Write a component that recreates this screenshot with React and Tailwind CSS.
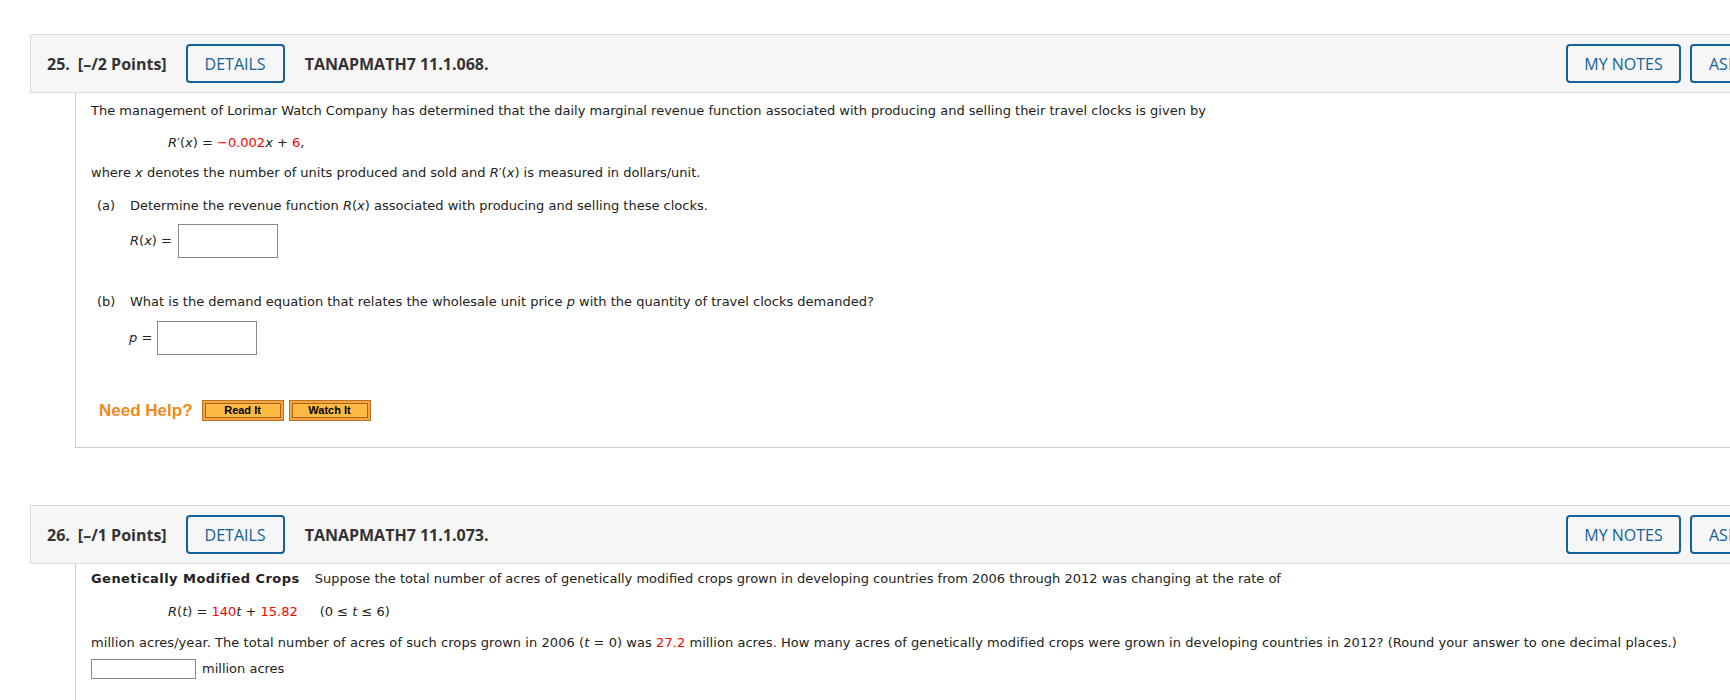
import React from "react";

const body = "font-['DejaVu_Sans',sans-serif] text-[13px] leading-[18px] text-[#222]";

function Header({ num, pts, code }) {
  return (
    <div className="w-[1900px] h-[59px] border border-[#dcdcdc] bg-[#f6f6f6] flex items-center font-['Open_Sans',sans-serif] text-[16px] text-[#333]">
      <div className="w-[1535px] shrink-0 flex items-center pl-[16px]">
        <span className="font-bold">{num}.</span>
        <span className="font-bold ml-[8px]">[–/{pts} Points]</span>
        <button className="ml-[19px] h-[39px] w-[99px] border-2 border-[#14609a] rounded-[4px] text-[#14609a] flex items-center justify-center">DETAILS</button>
        <span className="font-bold ml-[20px]">{code}</span>
      </div>
      <div className="flex items-center gap-[9px]">
        <button className="h-[39px] w-[115px] border-2 border-[#14609a] rounded-[4px] text-[#14609a] flex items-center justify-center">MY NOTES</button>
        <button className="h-[39px] px-[17px] border-2 border-[#14609a] rounded-[4px] text-[#14609a] flex items-center justify-center">ASK YOUR TEACHER</button>
      </div>
    </div>
  );
}

function HelpButton({ children }) {
  return (
    <div className="h-[21px] w-[82px] border border-[#b9732a] bg-[#f7a53a] p-[2px]">
      <div className="h-full w-full border border-[#a7641f] bg-[#fdbb46] flex items-center justify-center font-['Liberation_Sans',Arial,sans-serif] font-bold text-[11px] text-black leading-none">
        {children}
      </div>
    </div>
  );
}

const Red = ({ children }) => <span className="text-[#ff0000]">{children}</span>;
const I = ({ children }) => <span className="italic">{children}</span>;

export default function App() {
  return (
    <div className="w-[1730px] h-[700px] overflow-hidden bg-white">
      <div className="pt-[34px] pl-[30px]">
        <Header num="25" pts="2" code="TANAPMATH7 11.1.068." />
        <div className={`ml-[45px] w-[1855px] border-l border-b border-[#cccccc] pl-[15px] pt-[9px] pb-[26px] ${body}`}>
          <p>
            The management of Lorimar Watch Company has determined that the daily marginal revenue function associated with producing and selling their travel clocks is given by
          </p>
          <p className="mt-[14px] pl-[77px]">
            <I>R</I>′(<I>x</I>) = <Red>−0.002</Red><I>x</I> + <Red>6</Red>,
          </p>
          <p className="mt-[12px]">
            where <I>x</I> denotes the number of units produced and sold and <I>R</I>′(<I>x</I>) is measured in dollars/unit.
          </p>
          <div className="mt-[15px] flex">
            <span className="w-[39px] pl-[6px] shrink-0">(a)</span>
            <span>
              Determine the revenue function <I>R</I>(<I>x</I>) associated with producing and selling these clocks.
            </span>
          </div>
          <div className="mt-[9px] pl-[39px] flex items-center">
            <span>
              <I>R</I>(<I>x</I>) =
            </span>
            <div className="ml-[6px] w-[100px] h-[34px] border border-[#8a8a8a] bg-white" />
          </div>
          <div className="mt-[35px] flex">
            <span className="w-[39px] pl-[6px] shrink-0">(b)</span>
            <span>
              What is the demand equation that relates the wholesale unit price <I>p</I> with the quantity of travel clocks demanded?
            </span>
          </div>
          <div className="mt-[10px] pl-[38px] flex items-center">
            <span>
              <I>p</I> =
            </span>
            <div className="ml-[5px] w-[100px] h-[34px] border border-[#8a8a8a] bg-white" />
          </div>
          <div className="mt-[45px] pl-[8px] flex items-center">
            <span className="font-['Liberation_Sans',Arial,sans-serif] font-bold text-[17px] text-[#f08a1a] leading-none">Need Help?</span>
            <div className="ml-[9px] flex gap-[5px]">
              <HelpButton>Read It</HelpButton>
              <HelpButton>Watch It</HelpButton>
            </div>
          </div>
        </div>

        <div className="h-[57px]" />

        <Header num="26" pts="1" code="TANAPMATH7 11.1.073." />
        <div className={`ml-[45px] w-[1855px] h-[200px] border-l border-[#cccccc] pl-[15px] pt-[6px] ${body}`}>
          <p>
            <span className="font-bold tracking-[0.45px]">Genetically Modified Crops</span>
            <span className="ml-[15px]">
              Suppose the total number of acres of genetically modified crops grown in developing countries from 2006 through 2012 was changing at the rate of
            </span>
          </p>
          <p className="mt-[15px] pl-[77px]">
            <I>R</I>(<I>t</I>) = <Red>140</Red><I>t</I> + <Red>15.82</Red>
            <span className="ml-[22px]">
              (0 ≤ <I>t</I> ≤ 6)
            </span>
          </p>
          <p className="mt-[13px] tracking-[0.06px]">
            million acres/year. The total number of acres of such crops grown in 2006 (<I>t</I> = 0) was <Red>27.2</Red> million acres. How many acres of genetically modified crops were grown in developing countries in 2012? (Round your answer to one decimal places.)
          </p>
          <div className="mt-[7px] flex items-center">
            <div className="w-[105px] h-[20px] border border-[#8a8a8a] bg-white" />
            <span className="ml-[6px]">million acres</span>
          </div>
        </div>
      </div>
    </div>
  );
}
